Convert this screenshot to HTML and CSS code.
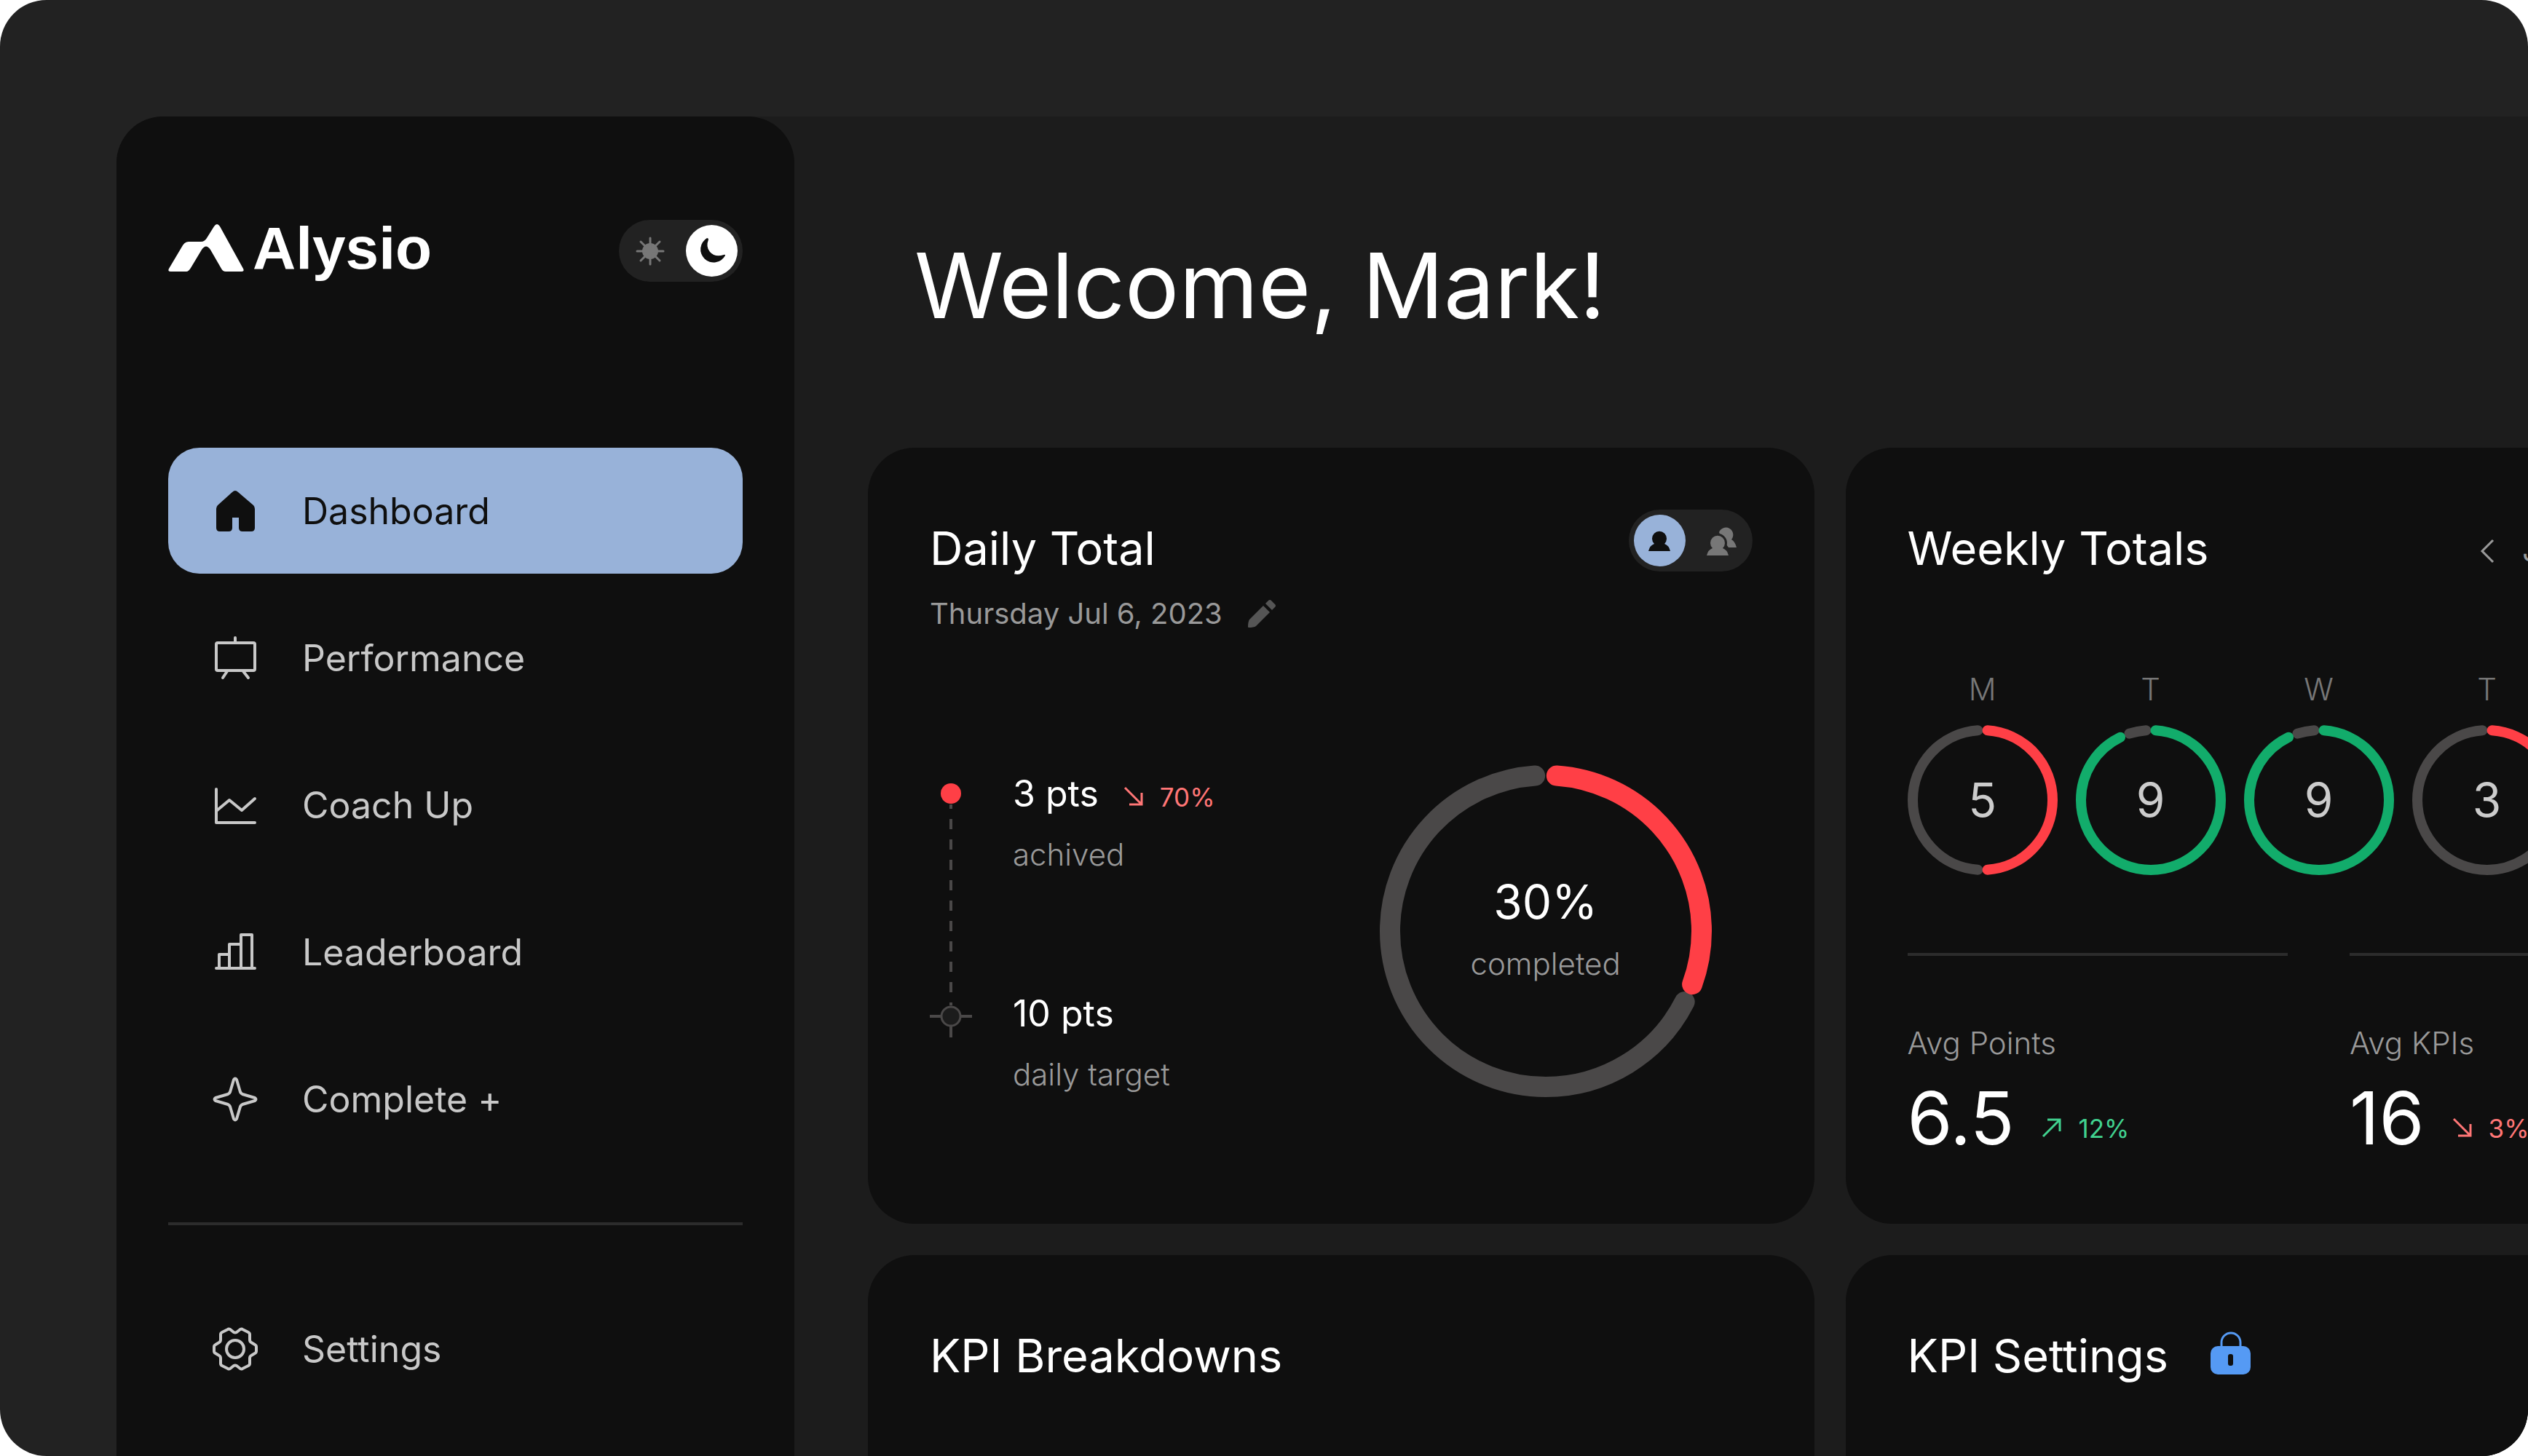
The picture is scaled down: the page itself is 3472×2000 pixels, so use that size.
FILE: index.html
```html
<!DOCTYPE html>
<html lang="en">
<head>
  <meta charset="UTF-8">
  <meta name="viewport" content="width=device-width, initial-scale=1.0">
  <title>Dashboard - Alysio</title>
  <link rel="stylesheet" href="styles.css">
</head>
<body>
  <div class="page">
    <div class="app">
      <aside class="sidebar">
        <div class="sidebar-top">
          <a href="#" class="logo">
            <svg class="logo-mark" viewBox="0 0 104 65" aria-hidden="true">
              <path d="M3 65 Q-1 65 1 61 L20 29 Q23 24 28 24 H45 Q50 24 53 19 L63 3 Q67 -3 71 3 L103 61 Q105 65 101 65 H79 Q75 65 73 61 L58 35 Q52 26 46 35 L31 60 Q28 65 25 65 Z"/>
            </svg>
            <span>Alysio</span>
          </a>
          <div class="toggle">
            <button class="toggle-button" aria-label="Light mode">
              <svg class="toggle-icon" viewBox="0 0 40 40" aria-hidden="true">
                <circle cx="20" cy="20" r="11" fill="currentColor"/>
                <path d="M20 2V38M2 20H38M7 7L33 33M33 7L7 33" stroke="currentColor" stroke-width="3" stroke-linecap="round"/>
              </svg>
            </button>
            <button class="toggle-button toggle-white" aria-label="Dark mode">
              <svg class="toggle-icon" viewBox="0 0 40 40" aria-hidden="true">
                <path d="M13 2 A18 18 0 1 0 38 26 Q38 24 36 25 Q24 29 17 21 Q11 14 15 4 Q15 2 13 2Z" fill="currentColor"/>
              </svg>
            </button>
          </div>
        </div>

        <nav>
          <ul class="menu">
            <li><a href="#" class="menu-link active">
              <svg class="icon" viewBox="0 0 64 64" aria-hidden="true"><path d="M28 6 Q32 2 36 6 L57 24 Q59 26 59 29 V55 Q59 60 54 60 H42 Q37 60 37 55 V41 H28 V55 Q28 60 23 60 H11 Q6 60 6 55 V29 Q6 26 8 24Z" fill="currentColor"/></svg>
              Dashboard</a></li>
            <li><a href="#" class="menu-link">
              <svg class="icon line" viewBox="0 0 64 64" aria-hidden="true"><rect x="6" y="11" width="53" height="38" rx="2"/><path d="M32 4V10M21 50L15 59M43 50L50 59"/></svg>
              Performance</a></li>
            <li><a href="#" class="menu-link">
              <svg class="icon line" viewBox="0 0 64 64" aria-hidden="true"><path d="M6 10V56H59M6 40L24 25L41 39L59 23"/></svg>
              Coach Up</a></li>
            <li><a href="#" class="menu-link">
              <svg class="icon line" viewBox="0 0 64 64" aria-hidden="true"><path d="M6 54H59M10 54V35H24M24 54V21H40M40 54V8H55V54"/></svg>
              Leaderboard</a></li>
            <li><a href="#" class="menu-link">
              <svg class="icon line" viewBox="0 0 64 64" aria-hidden="true"><path d="M30 5 Q32 2 34 5 L39 22 Q40 24 42 25 L59 30 Q62 32 59 34 L42 39 Q40 40 39 42 L34 59 Q32 62 30 59 L25 42 Q24 40 22 39 L5 34 Q2 32 5 30 L22 25 Q24 24 25 22Z"/></svg>
              Complete +</a></li>
          </ul>
          <hr class="line-break">
          <a href="#" class="menu-link">
            <svg class="icon line" viewBox="0 0 64 64" aria-hidden="true"><circle cx="32" cy="32" r="12"/><path d="M22 5 Q23 4 25 5 L30 9 Q32 10 34 9 L39 5 Q41 4 42 5 L50 9 Q52 10 52 12 V19 Q52 22 54 23 L59 26 Q61 27 61 29 V35 Q61 37 59 38 L54 41 Q52 42 52 45 V52 Q52 54 50 55 L42 59 Q41 60 39 59 L34 55 Q32 54 30 55 L25 59 Q23 60 22 59 L14 55 Q12 54 12 52 V45 Q12 42 10 41 L5 38 Q3 37 3 35 V29 Q3 27 5 26 L10 23 Q12 22 12 19 V12 Q12 10 14 9Z"/></svg>
            Settings</a>
        </nav>
      </aside>

      <main class="main">
        <h1>Welcome, Mark!</h1>

        <div class="cards">
          <section class="card">
            <div class="card-head">
              <h2>Daily Total</h2>
              <div class="toggle">
                <button class="toggle-button toggle-blue" aria-label="My total">
                  <svg class="toggle-icon" viewBox="0 0 40 40" aria-hidden="true"><path d="M13 24 A10 10 0 1 1 27 24 Q33 26 35 34 H5 Q7 26 13 24Z" fill="currentColor"/></svg>
                </button>
                <button class="toggle-button" aria-label="Team total">
                  <svg class="toggle-icon" viewBox="0 0 40 40" aria-hidden="true">
                    <path d="M17 8 A10 10 0 1 1 34 18 Q39 21 41 29 H30 L20 16Z" fill="currentColor"/>
                    <path d="M8 30 A10 10 0 1 1 22 30 Q28 32 30 40 H0 Q2 32 8 30Z" fill="currentColor" stroke="#222" stroke-width="6" paint-order="stroke"/>
                  </svg>
                </button>
              </div>
            </div>
            <div class="date">
              Thursday Jul 6, 2023
              <button class="edit-button" aria-label="Change date">
                <svg viewBox="0 0 40 40" aria-hidden="true"><path d="M22 9 L31 18 L12 37 Q9 39 2 39 Q1 39 1 38 Q1 31 3 28ZM25 6 L29 2 Q31 0 33 2 L38 7 Q40 9 38 11 L34 15Z" fill="currentColor"/></svg>
              </button>
            </div>

            <div class="daily">
              <svg class="timeline" viewBox="0 0 58 350" aria-hidden="true">
                <path d="M29 30V306" stroke="#4a4848" stroke-width="4" stroke-dasharray="14 14" stroke-dashoffset="8"/>
                <circle cx="29" cy="15" r="14" fill="#ff3f46"/>
                <path d="M0 321H58M29 307V350" stroke="#4a4848" stroke-width="4"/>
                <circle cx="29" cy="321" r="13" fill="#1c1c1c" stroke="#4a4848" stroke-width="3"/>
              </svg>
              <div class="points">
                <div>
                  <p class="point-value">3 pts
                    <span class="trend down"><svg viewBox="0 0 28 28" aria-hidden="true"><path d="M2 2L25 25M8 25H25V9"/></svg>70%</span>
                  </p>
                  <p class="muted">achived</p>
                </div>
                <div>
                  <p class="point-value">10 pts</p>
                  <p class="muted">daily target</p>
                </div>
              </div>
              <div class="ring ring-big">
                <svg viewBox="0 0 456 456" aria-hidden="true">
                  <circle class="arc" cx="228" cy="228" r="214" pathLength="360" stroke-dasharray="239 121" stroke-dashoffset="-117"/>
                  <circle class="arc red" cx="228" cy="228" r="214" pathLength="360" stroke-dasharray="106 254" stroke-dashoffset="-4"/>
                </svg>
                <div class="ring-text">
                  <strong>30%</strong>
                  <span class="muted">completed</span>
                </div>
              </div>
            </div>
          </section>

          <section class="card">
            <div class="card-head">
              <h2>Weekly Totals</h2>
              <div class="week">
                <button class="week-button" aria-label="Previous week"><svg viewBox="0 0 20 34" aria-hidden="true"><path d="M18 2L3 17L18 32"/></svg></button>
                <span>Jul 3 - Jul 7</span>
              </div>
            </div>

            <div class="days">
              <div class="day">
                <span class="day-name">M</span>
                <div class="ring">
                  <svg viewBox="0 0 206 206" aria-hidden="true">
                    <circle class="arc" cx="103" cy="103" r="96" pathLength="360" stroke-dasharray="172 188" stroke-dashoffset="-184"/>
                    <circle class="arc red" cx="103" cy="103" r="96" pathLength="360" stroke-dasharray="172 188" stroke-dashoffset="-4"/>
                  </svg>
                  <div class="ring-text">5</div>
                </div>
              </div>
              <div class="day">
                <span class="day-name">T</span>
                <div class="ring">
                  <svg viewBox="0 0 206 206" aria-hidden="true">
                    <circle class="arc" cx="103" cy="103" r="96" pathLength="360" stroke-dasharray="14 346" stroke-dashoffset="-342"/>
                    <circle class="arc green" cx="103" cy="103" r="96" pathLength="360" stroke-dasharray="330 30" stroke-dashoffset="-4"/>
                  </svg>
                  <div class="ring-text">9</div>
                </div>
              </div>
              <div class="day">
                <span class="day-name">W</span>
                <div class="ring">
                  <svg viewBox="0 0 206 206" aria-hidden="true">
                    <circle class="arc" cx="103" cy="103" r="96" pathLength="360" stroke-dasharray="14 346" stroke-dashoffset="-342"/>
                    <circle class="arc green" cx="103" cy="103" r="96" pathLength="360" stroke-dasharray="330 30" stroke-dashoffset="-4"/>
                  </svg>
                  <div class="ring-text">9</div>
                </div>
              </div>
              <div class="day">
                <span class="day-name">T</span>
                <div class="ring">
                  <svg viewBox="0 0 206 206" aria-hidden="true">
                    <circle class="arc" cx="103" cy="103" r="96" pathLength="360" stroke-dasharray="239 121" stroke-dashoffset="-117"/>
                    <circle class="arc red" cx="103" cy="103" r="96" pathLength="360" stroke-dasharray="105 255" stroke-dashoffset="-4"/>
                  </svg>
                  <div class="ring-text">3</div>
                </div>
              </div>
            </div>

            <div class="averages">
              <div class="average">
                <p class="muted">Avg Points</p>
                <p class="average-value">6.5
                  <span class="trend up"><svg viewBox="0 0 28 28" aria-hidden="true"><path d="M2 26L25 3M8 3H25V19"/></svg>12%</span>
                </p>
              </div>
              <div class="average">
                <p class="muted">Avg KPIs</p>
                <p class="average-value">16
                  <span class="trend down"><svg viewBox="0 0 28 28" aria-hidden="true"><path d="M2 2L25 25M8 25H25V9"/></svg>3%</span>
                </p>
              </div>
            </div>
          </section>

          <section class="card">
            <div class="card-head">
              <h2>KPI Breakdowns</h2>
            </div>
          </section>

          <section class="card">
            <div class="card-head">
              <h2>KPI Settings</h2>
              <svg class="lock" viewBox="0 0 56 60" aria-hidden="true">
                <path d="M15 24V15A13 13 0 0 1 41 15V24" fill="none" stroke="#559af4" stroke-width="3"/>
                <rect x="0" y="20" width="55" height="39" rx="10" fill="#559af4"/>
                <rect x="24" y="31" width="7" height="16" rx="3" fill="#0f0f0f"/>
              </svg>
            </div>
          </section>
        </div>
      </main>
    </div>
  </div>
</body>
</html>
```
FILE: styles.css
```css
* {
  box-sizing: border-box;
}

body {
  margin: 0;
  background-color: #fff;
  color: #fff;
  font-family: Inter, "Liberation Sans", sans-serif;
  font-size: 40px;
  line-height: 1;
}

h1, h2, p, ul {
  margin: 0;
  padding: 0;
  font-weight: 400;
}

button {
  border: none;
  padding: 0;
  background: none;
  color: inherit;
  cursor: pointer;
}

svg {
  display: block;
}

.page {
  height: 100vh;
  padding: 160px 0 0 160px;
  border-radius: 64px;
  background-color: #222;
  overflow: hidden;
}

.app {
  display: flex;
  height: 100%;
  border-top-left-radius: 64px;
  background-color: #1c1c1c;
}

/* Sidebar */
.sidebar {
  flex: 0 0 931px;
  padding: 142px 71px 0;
  border-radius: 64px 64px 0 0;
  background-color: #0f0f0f;
}

.sidebar-top {
  display: flex;
  justify-content: space-between;
  align-items: center;
  height: 85px;
  margin-bottom: 228px;
}

.logo {
  display: flex;
  align-items: center;
  gap: 12px;
  padding-bottom: 8px;
  color: #fff;
  font-family: "Liberation Sans", Arial, sans-serif;
  font-size: 82px;
  font-weight: bold;
  text-decoration: none;
}

.logo-mark {
  width: 104px;
  fill: #fff;
}

.toggle {
  display: flex;
  gap: 14px;
  padding: 7px;
  border-radius: 43px;
  background-color: #222;
  color: #777;
}

.toggle-button {
  display: flex;
  justify-content: center;
  align-items: center;
  width: 71px;
  height: 71px;
  border-radius: 50%;
}

.toggle-icon {
  width: 40px;
  overflow: visible;
}

.toggle-white {
  background-color: #fff;
  color: #0f0f0f;
}

.toggle-blue {
  background-color: #98b2d9;
  color: #0f0f0f;
}

.menu {
  display: flex;
  flex-direction: column;
  gap: 29px;
  list-style-type: none;
}

.menu-link {
  display: flex;
  align-items: center;
  gap: 60px;
  height: 173px;
  padding-left: 60px;
  border-radius: 43px;
  color: #c8c8c8;
  font-size: 50px;
  text-decoration: none;
}

.menu-link.active {
  background-color: #98b2d9;
  color: #0f0f0f;
}

.icon {
  width: 64px;
  height: 64px;
}

.line {
  fill: none;
  stroke: currentColor;
  stroke-width: 4;
  stroke-linecap: round;
  stroke-linejoin: round;
}

.line-break {
  height: 4px;
  margin: 83px 0;
  border: none;
  background-color: #2c2c2c;
}

/* Main content */
.main {
  flex: 1;
  min-width: 0;
  padding: 170px 0 0 101px;
}

h1 {
  margin: 0 0 161px 64px;
  font-size: 124px;
}

.cards {
  display: grid;
  grid-template-columns: repeat(2, 57%);
  gap: 43px;
}

.card {
  min-height: 1066px;
  padding: 85px;
  border-radius: 64px;
  background-color: #0f0f0f;
}

.card-head {
  display: flex;
  align-items: center;
  height: 106px;
}

.card-head .toggle {
  align-self: flex-start;
  margin-left: auto;
}

h2 {
  font-size: 63px;
}

.date {
  display: flex;
  align-items: center;
  gap: 34px;
  margin-top: 17px;
  color: #999;
}

.edit-button {
  width: 40px;
  color: #555;
}

.muted {
  color: #999;
  font-size: 42px;
  font-weight: 300;
}

.daily {
  display: flex;
  align-items: flex-start;
  margin-top: 188px;
  padding-right: 56px;
}

.timeline {
  width: 58px;
  height: 350px;
  margin-top: 24px;
}

.points {
  display: flex;
  flex: 1;
  flex-direction: column;
  gap: 172px;
  margin: 14px 0 0 56px;
}

.point-value {
  display: flex;
  align-items: baseline;
  gap: 34px;
  margin-bottom: 38px;
  font-size: 50px;
}

/* the arrow stands on the baseline of the number */
.trend {
  display: flex;
  align-items: baseline;
  gap: 22px;
  font-size: 35px;
}

.trend svg {
  width: 28px;
  fill: none;
  stroke: currentColor;
  stroke-width: 3;
}

.down {
  color: #ff7676;
}

.up {
  color: #41d28f;
}

/* Progress rings, the text lies over the svg */
.ring {
  display: grid;
  width: 206px;
}

.ring > * {
  grid-area: 1 / 1;
}

.ring-big {
  width: 456px;
}

.ring svg {
  transform: rotate(-90deg);
}

.arc {
  fill: none;
  stroke: #4a4848;
  stroke-width: 14;
  stroke-linecap: round;
}

.ring-big .arc {
  stroke-width: 28;
}

.arc.red {
  stroke: #ff3f46;
}

.arc.green {
  stroke: #12ac6b;
}

.ring-text {
  display: flex;
  flex-direction: column;
  justify-content: center;
  align-items: center;
  gap: 32px;
  color: #ccc;
  font-size: 64px;
}

.ring-big .ring-text {
  padding-bottom: 6px;
}

.ring-text strong {
  color: #fff;
  font-weight: 400;
}

.week {
  display: flex;
  align-items: center;
  gap: 38px;
  width: 343px;
  margin: 8px 0 0 auto;
  color: #999;
  white-space: nowrap;
}

.week-button svg {
  width: 20px;
  fill: none;
  stroke: currentColor;
  stroke-width: 3;
}

.days {
  display: flex;
  gap: 25px;
  margin-top: 120px;
}

.day {
  display: flex;
  flex-direction: column;
  align-items: center;
  gap: 28px;
}

.day-name {
  color: #777;
  font-size: 42px;
  font-weight: 300;
}

.averages {
  display: grid;
  grid-template-columns: 1fr 1fr;
  gap: 85px;
  margin-top: 107px;
}

.average {
  padding-top: 99px;
  border-top: 4px solid #2c2c2c;
}

.average-value {
  display: flex;
  align-items: flex-end;
  gap: 38px;
  margin-top: 32px;
  font-size: 100px;
}

.average-value .trend {
  padding-bottom: 18px;
}

.lock {
  width: 56px;
  margin: 0 0 6px 58px;
}
```
